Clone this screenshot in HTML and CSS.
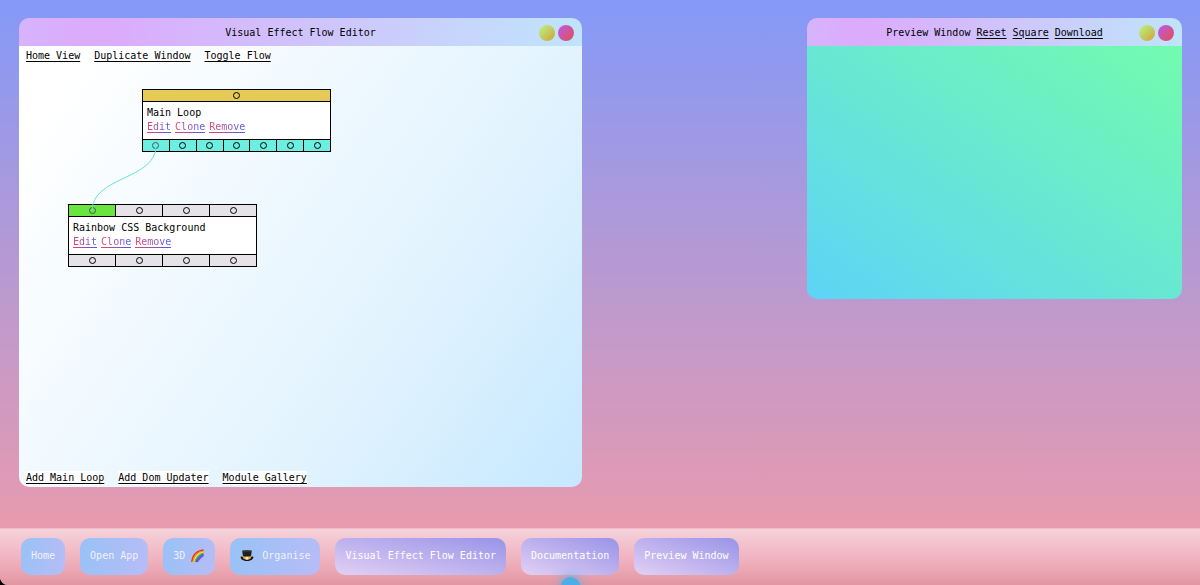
FILE: index.html
```html
<!DOCTYPE html>
<html lang="en">
<head>
    <meta charset="UTF-8">
    <meta name="viewport" content="width=device-width, initial-scale=1.0">
    <title>Visual Effect Flow Editor</title>
    <link rel="stylesheet" href="styles.css">
</head>
<body>

<div class="desktop">
    <main class="workspace">

        <!-- Flow editor -->
        <section class="window editor">
            <header class="titlebar">
                <h2 class="title">Visual Effect Flow Editor</h2>
                <div class="window-buttons">
                    <button type="button" class="dot minimise" aria-label="Minimise"></button>
                    <button type="button" class="dot close" aria-label="Close"></button>
                </div>
            </header>
            <div class="flow">
                <nav class="toolbar">
                    <a href="#">Home View</a>
                    <a href="#">Duplicate Window</a>
                    <a href="#">Toggle Flow</a>
                </nav>

                <article class="node main-loop">
                    <div class="ports gold">
                        <button type="button" class="port" aria-label="Input 1"></button>
                    </div>
                    <div class="node-body">
                        <h3>Main Loop</h3>
                        <div class="actions">
                            <a href="#">Edit</a>
                            <a href="#">Clone</a>
                            <a href="#">Remove</a>
                        </div>
                    </div>
                    <div class="ports aqua">
                        <button type="button" class="port linked" aria-label="Output 1"></button>
                        <button type="button" class="port" aria-label="Output 2"></button>
                        <button type="button" class="port" aria-label="Output 3"></button>
                        <button type="button" class="port" aria-label="Output 4"></button>
                        <button type="button" class="port" aria-label="Output 5"></button>
                        <button type="button" class="port" aria-label="Output 6"></button>
                        <button type="button" class="port" aria-label="Output 7"></button>
                    </div>
                </article>

                <article class="node rainbow">
                    <div class="ports">
                        <button type="button" class="port linked green" aria-label="Input 1"></button>
                        <button type="button" class="port" aria-label="Input 2"></button>
                        <button type="button" class="port" aria-label="Input 3"></button>
                        <button type="button" class="port" aria-label="Input 4"></button>
                    </div>
                    <div class="node-body">
                        <h3>Rainbow CSS Background</h3>
                        <div class="actions">
                            <a href="#">Edit</a>
                            <a href="#">Clone</a>
                            <a href="#">Remove</a>
                        </div>
                    </div>
                    <div class="ports">
                        <button type="button" class="port" aria-label="Output 1"></button>
                        <button type="button" class="port" aria-label="Output 2"></button>
                        <button type="button" class="port" aria-label="Output 3"></button>
                        <button type="button" class="port" aria-label="Output 4"></button>
                    </div>
                </article>

                <!-- Wire between the nodes -->
                <svg class="wires" aria-hidden="true">
                    <path d="M137 100 C137 134 73 130 73 165" />
                </svg>

                <nav class="toolbar">
                    <a href="#">Add Main Loop</a>
                    <a href="#">Add Dom Updater</a>
                    <a href="#">Module Gallery</a>
                </nav>
            </div>
        </section>

        <!-- Preview -->
        <section class="window preview">
            <header class="titlebar">
                <div class="title">
                    <h2>Preview Window</h2>
                    <a href="#">Reset</a>
                    <a href="#">Square</a>
                    <a href="#">Download</a>
                </div>
                <div class="window-buttons">
                    <button type="button" class="dot minimise" aria-label="Minimise"></button>
                    <button type="button" class="dot close" aria-label="Close"></button>
                </div>
            </header>
            <div class="screen"></div>
        </section>
    </main>

    <!-- Taskbar -->
    <footer class="taskbar">
        <button type="button" class="task">Home</button>
        <button type="button" class="task">Open App</button>
        <button type="button" class="task">3D
            <svg class="icon" viewBox="0 0 14 14" aria-hidden="true">
                <g fill="none" stroke-width="1.4">
                    <path d="M0.8 13 C1.5 6 6 1.5 12.6 1" stroke="#ee2b24" />
                    <path d="M1.9 13 C2.6 7 7 2.6 12.6 2.1" stroke="#ff8a1c" />
                    <path d="M3 13 C3.7 8 8 3.7 12.6 3.2" stroke="#ffe22e" />
                    <path d="M4.1 13 C4.8 9 9 4.8 12.6 4.3" stroke="#3fc43c" />
                    <path d="M5.2 13 C5.9 10 10 5.9 12.6 5.4" stroke="#2b5bf0" />
                    <path d="M6.3 13 C7 11 11 7 12.6 6.5" stroke="#8a3fd8" />
                </g>
            </svg>
        </button>
        <button type="button" class="task wide-gap">
            <svg class="icon" viewBox="0 0 14 14" aria-hidden="true">
                <path d="M0.6 8 C1.6 7 2.4 7.6 3 8 H11 C11.6 7.6 12.4 7 13.4 8 C13.4 10.4 10.6 12 7 12 C3.4 12 0.6 10.4 0.6 8 Z" fill="#161616" />
                <path d="M2.2 1.8 C4 1 10 1 11.8 1.8 L10.8 9 C9 10.6 5 10.6 3.2 9 Z" fill="#202020" />
                <path d="M2.9 7 C5 8 9 8 11.1 7 L10.8 9.6 C9 11 5 11 3.2 9.6 Z" fill="#d9a441" />
                <path d="M5.6 7.8 H8.4 V10.4 H5.6 Z" fill="#ffefb8" />
                <ellipse cx="7" cy="1.9" rx="4.6" ry="0.7" fill="#444" />
            </svg>
            Organise
        </button>
        <button type="button" class="task open">Visual Effect Flow Editor</button>
        <button type="button" class="task open">Documentation</button>
        <button type="button" class="task open">Preview Window</button>
    </footer>
    <div class="orb"></div>
</div>

</body>
</html>
```

FILE: styles.css
```css
*, *::before {
    box-sizing: border-box;
}
html {
    background: #000;
}
body {
    margin: 0;
    font-family: "DejaVu Sans Mono", monospace;
    font-size: 10px;
    line-height: 14px;
    color: #000;
}
h2, h3 {
    margin: 0;
    font-size: 10px;
    font-weight: normal;
}
a {
    color: inherit;
    text-underline-offset: 2px;
}
button {
    padding: 0;
    border: none;
    font: inherit;
    cursor: pointer;
}
.desktop {
    position: relative;
    display: flex;
    flex-direction: column;
    height: 100vh;
    overflow: hidden;
    border-radius: 0 0 0 8px;
    background: linear-gradient(#8499f8, #ec9aab 94%);
}
.workspace {
    position: relative;
    flex: 1;
}

/* Windows */
.window {
    position: absolute;
    top: 18px;
    display: flex;
    flex-direction: column;
    overflow: hidden;
    border-radius: 10px;
}
.editor {
    left: 19px;
    width: 563px;
    height: 469px;
}
.preview {
    right: 18px;
    width: 375px;
    height: 281px;
}
.titlebar {
    display: grid;
    grid-template-columns: 1fr auto 1fr;
    align-items: center;
    height: 28px;
    padding: 1px 8px 0;
    background: radial-gradient(circle at 14% 30%, #dcaafc, #bfe4fc);
}
.title {
    grid-column: 2;
    display: flex;
    gap: 6px;
}
.window-buttons {
    display: flex;
    justify-content: flex-end;
    gap: 3px;
}
.dot {
    width: 16px;
    height: 16px;
    border-radius: 50%;
}
.minimise {
    background: linear-gradient(135deg, #b9f58a, #cfa432);
}
.close {
    background: linear-gradient(135deg, #b95bea, #e3504f);
}
.screen {
    flex: 1;
    background: linear-gradient(to top right, #5dd4f7, #73fbae);
}

/* Flow canvas */
.flow {
    position: relative;
    flex: 1;
    display: flex;
    flex-direction: column;
    justify-content: space-between;
    padding: 3px 7px 2px;
    background: linear-gradient(125deg, #fff 8%, #f0f9ff 38%, #e2f3fe 65%, #c6e8ff);
}
.toolbar {
    display: flex;
    gap: 14px;
}
.toolbar a {
    background: #fff;
}
.node {
    position: absolute;
    width: 189px;
    border: 1px solid #000;
    background: #fff;
}
.main-loop {
    left: 123px;
    top: 43px;
}
.rainbow {
    left: 49px;
    top: 158px;
}
.node-body {
    padding: 4px;
    padding-bottom: 5px;
    border: solid #000;
    border-width: 1px 0;
}
.actions {
    display: flex;
    gap: 4px;
}
/* The first layer is the underline, the second fills the letters */
.actions a {
    color: transparent;
    text-decoration: none;
    background-image: linear-gradient(90deg, #e8476a, #4a5cf0), linear-gradient(90deg, #e8476a, #4a5cf0);
    background-position: 0 12px, 0 0;
    background-size: 100% 1px, 100% 100%;
    background-repeat: no-repeat;
    background-clip: border-box, text;
}
.ports {
    display: flex;
    height: 11px;
    background: #e5e3e7;
}
.gold {
    background: #e5ca55;
}
.aqua {
    background: #6ceee0;
}
.port {
    flex: 1;
    display: flex;
    align-items: center;
    justify-content: center;
    background: transparent;
}
.port + .port {
    border-left: 1px solid #000;
}
.port::before {
    content: "";
    width: 7px;
    height: 7px;
    border: 1px solid #000;
    border-radius: 50%;
}
.port.green {
    background: #6ae43e;
}
.linked::before {
    border-color: #456;
}
.wires {
    position: absolute;
    left: 0;
    top: 0;
    width: 100%;
    height: 100%;
    pointer-events: none;
}
.wires path {
    fill: none;
    stroke: #62e6dc;
    stroke-width: 1;
}

/* Taskbar */
.taskbar {
    display: flex;
    align-items: center;
    gap: 15px;
    height: 57px;
    padding: 0 21px 2px;
    border-top: 1px solid #f3b9c9;
    background: linear-gradient(#f5d2dc, #f0b2be 55%, #e296a2);
}
.task {
    display: flex;
    align-items: center;
    gap: 6px;
    height: 37px;
    padding: 0 10px;
    border-radius: 10px;
    color: #f1f1ff;
    background: linear-gradient(100deg, #98c2f6, #b7bcf6);
}
.wide-gap {
    gap: 8px;
}
.open {
    color: #fff;
    background: linear-gradient(to top right, #e2d0f4, #9893e8);
}
.icon {
    width: 14px;
    height: 14px;
}
.orb {
    position: absolute;
    left: 561px;
    bottom: -11px;
    width: 19px;
    height: 19px;
    border-radius: 50%;
    background: #4baee8;
    box-shadow: 0 0 12px #4baee8;
}
```
